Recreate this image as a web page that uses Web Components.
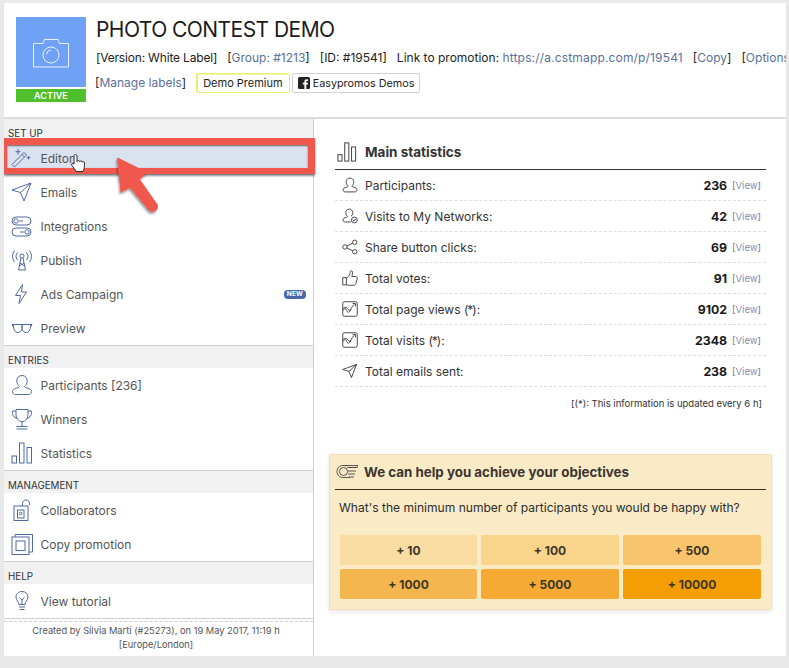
<!DOCTYPE html>
<html>
<head>
<meta charset="utf-8">
<title>Photo contest demo</title>
<style>
    html, body { margin: 0; padding: 0; }
    body { background: #e9e9e9; font-family: Inter, "Liberation Sans", sans-serif; overflow: hidden; }
    .tight { letter-spacing: -1px; margin-right: 1px; }
</style>
</head>
<body>

<promo-page>
    <promo-header slot="header"></promo-header>
    <side-menu slot="side">
        <menu-section label="SET UP">
            <menu-item icon="wand" active>Editor</menu-item>
            <menu-item icon="send">Emails</menu-item>
            <menu-item icon="toggles">Integrations</menu-item>
            <menu-item icon="antenna">Publish</menu-item>
            <menu-item icon="bolt" badge="NEW">Ads Campaign</menu-item>
            <menu-item icon="glasses">Preview</menu-item>
        </menu-section>
        <menu-section label="ENTRIES">
            <menu-item icon="user">Participants [236]</menu-item>
            <menu-item icon="trophy">Winners</menu-item>
            <menu-item icon="bars">Statistics</menu-item>
        </menu-section>
        <menu-section label="MANAGEMENT">
            <menu-item icon="lock">Collaborators</menu-item>
            <menu-item icon="copy">Copy promotion</menu-item>
        </menu-section>
        <menu-section label="HELP">
            <menu-item icon="bulb">View tutorial</menu-item>
        </menu-section>
        <created-note>Created by Sílvia Martí (#25273), on 19 May 2017, 11:19 h<br>[Europe/London]</created-note>
    </side-menu>
    <main-stats slot="main">
        <stat-row icon="user" value="236">Participants:</stat-row>
        <stat-row icon="usercheck" value="42">Visits to My Networks:</stat-row>
        <stat-row icon="share" value="69">Share button clicks:</stat-row>
        <stat-row icon="thumb" value="91">Total votes:</stat-row>
        <stat-row icon="chart" value="9102">Total page views <span class="tight">(*)</span>:</stat-row>
        <stat-row icon="chart" value="2348">Total visits <span class="tight">(*)</span>:</stat-row>
        <stat-row icon="send" value="238">Total emails sent:</stat-row>
    </main-stats>
    <help-card slot="main"></help-card>
    <editor-callout slot="overlay"></editor-callout>
</promo-page>

<template id="promo-page">
    <style>
        :host { display: block; position: relative; width: 782px; height: 653px; margin: 3px 0 0 4px; background: #fff; overflow: hidden; box-shadow: 0 1px 1px #ddd; }
        .body { display: grid; grid-template-columns: 310px 1fr; height: 539px; border-top: 2px solid #dcdcdc; }
        .main { padding: 13px 14px 0 15px; }
    </style>
    <slot name="header"></slot>
    <div class="body">
        <slot name="side"></slot>
        <div class="main"><slot name="main"></slot></div>
    </div>
    <slot name="overlay"></slot>
</template>

<template id="promo-header">
    <style>
        :host { display: flex; height: 114px; box-sizing: border-box; padding: 14px 0 0 12px; gap: 10px; color: #222; font-size: 12px; white-space: nowrap; overflow: hidden; }
        .thumb { width: 70px; flex: none; }
        .pic { height: 70px; background: #6fa1f6; border-radius: 1px; display: flex; align-items: center; justify-content: center; }
        .pic svg { margin-top: 3px; }
        .state { margin-top: 2px; height: 13px; line-height: 13px; background: #4fc02c; color: #fff; font-weight: 600; font-size: 9px; text-align: center; letter-spacing: .1px; }
        h1 { margin: 0; font-size: 21px; line-height: 26px; font-weight: 400; color: #1c1c1c; letter-spacing: -.55px; }
        .meta { display: flex; margin-top: 7px; line-height: 16px; }
        .meta span { margin-right: 10px; }
        .meta .version { letter-spacing: -.18px; }
        .meta .url { letter-spacing: .16px; }
        a { color: #5a7199; text-decoration: none; }
        .labels { display: flex; align-items: center; margin-top: 6px; height: 22px; }
        .labels .manage { margin-right: 9px; position: relative; top: -1px; left: -1px; }
        .tag { display: flex; align-items: center; gap: 3px; height: 20px; box-sizing: border-box; padding: 0 5px; border: 1px solid #d2d2d2; border-radius: 2px; font-size: 10.800px; color: #222; margin-right: 2px; }
        .tag.premium { padding: 0 6px; font-size: 11px; border: 1px solid #eded6a; box-shadow: inset 1px 0 #eded6a, inset 0 1px #f6f6a8; }
    </style>
    <div class="thumb">
        <div class="pic">
            <svg width="36" height="29" viewBox="0 0 36 29" fill="none" stroke="#fff" stroke-width="1" opacity=".85">
                <path d="M.5 4.500H10L11.500.5H25L26.500 4.500H35.500V28H.5z"/>
                <circle cx="18" cy="16" r="8"/>
                <path d="M13.500 15.500a4.800 4.800 0 0 1 4.500-4.500"/>
            </svg>
        </div>
        <div class="state">ACTIVE</div>
    </div>
    <div>
        <h1>PHOTO CONTEST DEMO</h1>
        <div class="meta">
            <span class="version">[Version: White Label]</span>
            <span>[<a>Group: #1213</a>]</span>
            <span>[ID: #19541]</span>
            <span>Link to promotion: <a class="url">https://a.cstmapp.com/p/19541</a></span>
            <span>[<a>Copy</a>]</span>
            <span>[<a>Options</a>]</span>
        </div>
        <div class="labels">
            <span class="manage">[<a>Manage labels</a>]</span>
            <div class="tag premium">Demo Premium</div>
            <div class="tag">
                <svg width="12" height="12" viewBox="0 0 12 12"><rect width="12" height="12" rx="1.500" fill="#222"/><path d="M8.300 12V7.500h1.500l.2-1.700H8.300V4.700c0-.5.200-.8.800-.8h1V2.400c-.2 0-.8-.1-1.400-.1-1.400 0-2.300.8-2.300 2.300v1.200H4.800v1.700h1.600V12z" fill="#fff"/></svg>
                Easypromos Demos
            </div>
        </div>
    </div>
</template>

<template id="side-menu">
    <style>
        :host { display: block; border-right: 1px solid #cfcfcf; box-sizing: border-box; width: 310px; }
    </style>
    <slot></slot>
</template>

<template id="menu-section">
    <style>
        :host { display: block; }
        .head { height: 22px; box-sizing: border-box; padding: 8px 0 0 4px; line-height: 14px; background: #f1f1f1; color: #333; font-size: 9.800px; }
        :host(:not(:first-child)) .head { border-top: 1px solid #cfcfcf; height: 23px; padding-top: 8px; }
    </style>
    <div class="head"></div>
    <slot></slot>
</template>

<template id="menu-item">
    <style>
        :host { display: flex; align-items: center; height: 34px; padding-left: 7px; color: #555; font-size: 12px; }
        :host([active]) { background: #dbe2ef; }
        .ico { width: 22px; height: 22px; margin-right: 7.500px; color: #4f6aa3; flex: none; }
        .text { flex: 1; }
        .badge { display: none; margin-right: 7px; height: 9px; line-height: 9px; padding: 0 3px; border-radius: 4px; background: #4a67ab; color: #fff; font-size: 6.500px; font-weight: 700; letter-spacing: .2px; }
    </style>
    <line-icon class="ico"></line-icon>
    <span class="text"><slot></slot></span>
    <span class="badge"></span>
</template>

<template id="created-note">
    <style>
        :host { display: block; border-top: 1px solid #cfcfcf; text-align: center; font-size: 9.300px; line-height: 14px; color: #555; }
        .inner { margin-top: 2px; border-top: 1px dashed #cfcfcf; padding: 2px 5px 0 0; }
    </style>
    <div class="inner"><slot></slot></div>
</template>

<template id="main-stats">
    <style>
        :host { display: block; }
        .title { display: flex; align-items: center; gap: 8px; height: 38px; padding: 3px 0 0 2px; border-bottom: 1px solid #333; color: #333; font-size: 13.500px; font-weight: 700; box-sizing: border-box; width: 431px; margin: 0 0 0 6px; }
        .title line-icon { width: 20px; height: 20px; color: #444; --sw: 1.100; }
        .rows { margin-left: 6px; width: 431px; }
        .note { margin: 10px 10px 0 0; text-align: right; font-size: 9.500px; line-height: 14px; color: #333; }
    </style>
    <div class="title"><line-icon name="bars"></line-icon>Main statistics</div>
    <div class="rows"><slot></slot></div>
    <div class="note">[(*): This information is updated every 6 h]</div>
</template>

<template id="stat-row">
    <style>
        :host { display: flex; align-items: center; height: 31px; box-sizing: border-box; border-bottom: 1px dashed #dedede; padding: 0 5px 0 7px; color: #333; font-size: 12px; }
        line-icon { width: 16px; height: 16px; margin-right: 7px; color: #333; flex: none; --sw: 1.200; }
        .label { flex: 1; }
        b { font-size: 12.300px; font-weight: 700; color: #1a1a1a; }
        .view { margin-left: 5px; font-size: 9.500px; color: #777; }
        a { color: #7d8fb3; }
    </style>
    <line-icon></line-icon>
    <span class="label"><slot></slot></span>
    <b></b>
    <span class="view">[<a>View</a>]</span>
</template>

<template id="help-card">
    <style>
        :host { display: block; margin: 43px 0 0 0; width: 443px; height: 156px; box-sizing: border-box; padding: 0 5px; background: #faebc6; border: 1px solid #f3e2b8; box-shadow: 0 2px 5px rgba(0,0,0,.1); color: #333; }
        .title { display: flex; align-items: center; gap: 6px; height: 35px; border-bottom: 1px solid #3a2f1c; padding-left: 1px; font-size: 13.350px; font-weight: 700; box-sizing: border-box; color: #3a3630; }
        .title line-icon { width: 22px; height: 22px; margin-top: 6px; color: #444; --sw: .9; }
        p { margin: 0; padding: 10px 0 0 4px; height: 45px; box-sizing: border-box; line-height: 16px; font-size: 12.050px; color: #2d2d2d; }
        .grid { display: grid; grid-template-columns: 137px 138px 138px; grid-auto-rows: 30px; gap: 4px; margin-left: 5px; }
        button { all: unset; text-align: center; font: 700 12px Inter, sans-serif; color: #3d3628; border-radius: 2px; }
    </style>
    <div class="title"><line-icon name="hand"></line-icon>We can help you achieve your objectives</div>
    <p>What's the minimum number of participants you would be happy with?</p>
    <div class="grid">
        <button style="background:#f9dca2">+ 10</button>
        <button style="background:#f9d48a">+ 100</button>
        <button style="background:#f7c46b">+ 500</button>
        <button style="background:#f6b64f">+ 1000</button>
        <button style="background:#f5aa34">+ 5000</button>
        <button style="background:#f49d04">+ 10000</button>
    </div>
</template>

<template id="editor-callout">
    <style>
        :host { display: block; position: absolute; left: -4px; top: -3px; width: 320px; height: 215px; pointer-events: none; }
        .frame { position: absolute; left: 4px; top: 138px; width: 311px; height: 36px; box-sizing: border-box; border: solid #f0584d; border-width: 7px 7px 6px 3px; box-shadow: inset 0 1px 2px rgba(0,0,0,.55), 0 2px 2px rgba(0,0,0,.45); }
        svg { position: absolute; left: 0; top: 0; overflow: visible; }
    </style>
    <div class="frame"></div>
    <svg width="320" height="215" viewBox="0 0 320 215">
        <defs>
            <filter id="sh" x="-30%" y="-30%" width="160%" height="160%"><feDropShadow dx="-1" dy="2" stdDeviation="1.200" flood-color="#000" flood-opacity=".4"/></filter>
        </defs>
        <path d="M117.500 158L147 172.500L139.500 179.500L156 203A4.500 4.500 0 0 1 149 210L130 187.500L121 192Z" fill="#f0584d" stroke="#f0584d" stroke-width="1" stroke-linejoin="round" filter="url(#sh)"/>
        <path d="M74 156c0-2 3-2 3 0v5.500c.5-1.500 2.500-1.200 2.700.2.500-1.200 2.400-1 2.500.4.600-.9 2.200-.6 2.300.7l-.2 4.500c-.1 2-1 3-1.500 4.300h-6.500c-1-1.700-3-4-4.500-6.500-.8-1.500.8-2.500 2-1.200l.2.200z" fill="#fff" stroke="#111" stroke-width=".9" stroke-linejoin="round"/>
    </svg>
</template>

<script type="text/javascript">
    const ICONS = {
        wand: '<path d="M1 17.500L13 5.500l2.500 2.500L3.500 20z"/><path d="M11 7.500l2.500 2.500"/><path d="M7 2v5.500M4.500 4.700h5M17.500 9v3.500M15.700 10.700h3.600"/>',
        send: '<path d="M1 9L20 2 13 20 9.500 11.500z"/><path d="M9.500 11.500L20 2"/>',
        toggles: '<rect x="1" y="2" width="19" height="8" rx="4"/><circle cx="5" cy="6" r="2.200"/><path d="M8 6h4"/><rect x="1" y="13" width="19" height="8" rx="4"/><circle cx="16" cy="17" r="2.200"/><path d="M9 17h4"/>',
        antenna: '<circle cx="11" cy="7" r="2"/><path d="M10 9L7.500 21h7L12 9M8.500 17l4.500-3M13.500 17L9 14"/><path d="M6.500 3.500a6 6 0 0 0 0 7.500M15.500 3.500a6 6 0 0 1 0 7.500M3.500 1.500a10 10 0 0 0 0 11.500M18.500 1.500a10 10 0 0 1 0 11.500"/>',
        bolt: '<path d="M11.500 1.500L4.500 12.500h5L8 20.500l7.500-11.500h-5z"/>',
        glasses: '<path d="M1 7.500h20M2.500 7.500c0 0-.5 8 4 8s5-4.500 4.500-8M11 7.500c-.5 3.500 0 8 4.500 8s4-8 4-8"/><path d="M1 7.500l1 2M21 7.500l-1 2"/>',
        user: '<path d="M11 1.500c-3 0-5.200 2.200-5.200 5.300 0 2.700 1.300 4.500 2.600 5.500 0 1-.8 1.300-2.500 1.700-2.400.6-4.400 1.500-4.400 3.600 0 2 1.300 2.900 3.300 2.900h12.400c2 0 3.300-.9 3.300-2.900 0-2.100-2-3-4.400-3.600-1.700-.4-2.500-.7-2.500-1.700 1.300-1 2.600-2.800 2.600-5.500 0-3.100-2.200-5.300-5.200-5.300z"/>',
        usercheck: '<path d="M10 1.500c-2.800 0-4.800 2-4.800 4.900 0 2.500 1.200 4.200 2.400 5.100 0 1-.7 1.200-2.300 1.600-2.200.6-4 1.400-4 3.400 0 1.800 1.200 2.700 3 2.700h8"/><path d="M10 1.500c2.800 0 4.800 2 4.800 4.900 0 2.500-1.200 4.200-2.400 5.100"/><circle cx="17" cy="16.500" r="4"/><path d="M15 16.500l1.500 1.500 2.500-3"/>',
        share: '<circle cx="4" cy="11" r="3"/><circle cx="17.500" cy="4.500" r="3"/><circle cx="17.500" cy="17.500" r="3"/><path d="M6.800 9.700L14.800 5.800M6.800 12.300l8 3.900"/>',
        thumb: '<path d="M1 10.500h5v10H1zM6 10.500c3 0 5-4 5.500-8.500 0-1.500 3-1.500 3 1.500 0 2-.5 4-1 5.500h5.500c2 0 2.500 2 1.800 3.500l-2 6.500c-.5 1.500-1.500 2-3 2H9c-1.500 0-3-1-3-1"/>',
        chart: '<rect x="1" y="1" width="20" height="20" rx="2.500"/><path d="M1.500 13c2-3.500 3.500-3.500 5 0s3 3.500 5-.5 3.500-6.500 6-8.500"/><path d="M1.500 10c2.500-2 5-1.500 7 1s3 2.500 4 1"/><path d="M14.500 3.500h4v4"/>',
        bars: '<rect x="1" y="14" width="4.500" height="7"/><rect x="8.500" y="1" width="4.500" height="20"/><rect x="16" y="5.500" width="4.500" height="15.500"/>',
        trophy: '<path d="M5 1.500h12v5c0 4-2.500 7-6 7s-6-3-6-7z"/><path d="M5 3H1.500c-.5 4 1 6.500 5 7.500M17 3h3.500c.5 4-1 6.500-5 7.500M11 13.500v5M5.500 18.500h11M5.500 21h11"/>',
        lock: '<rect x="3" y="7" width="14" height="14.500"/><rect x="6.500" y="11" width="6.500" height="8"/><circle cx="9.700" cy="14.500" r="1.300"/><path d="M11.500 7V4.500C11.500 2.500 13 1 15 1s3.500 1.500 3.500 3.500V6"/>',
        copy: '<rect x="1" y="4" width="17" height="17.500"/><rect x="5" y="8" width="9" height="9.500"/><path d="M4 4V1.500h17.500V19H18"/>',
        bulb: '<path d="M8 14.500c0-3-3-4-3-7.500 0-3.300 2.700-5.500 6-5.500s6 2.200 6 5.500c0 3.500-3 4.500-3 7.500z"/><path d="M8.500 7.500l2.500 2.500 2.500-2.500M11 10v4.500M8 17h6M8.500 19.500h5"/>',
        hand: '<path d="M8 1.500h14l-.8 2H11.500M11.500 3.500h9M12 7h8M12 10h7M13 13h5"/><path d="M11 1.500H7C3.500 1.500 1 4 1 7.500s2.500 6 6 6h7"/><circle cx="7.500" cy="7.500" r="4"/>'
    };

    // Small helper so every element gets its shadow the same way
    function attachTemplate(el, id) {
        const shadow = el.attachShadow({mode: 'open'});
        shadow.appendChild(document.getElementById(id).content.cloneNode(true));
        return shadow;
    }

    class LineIcon extends HTMLElement {
        constructor() {
            super();
            this.attachShadow({mode: 'open'});
        }
        static get observedAttributes() { return ['name']; }
        attributeChangedCallback() { this.draw(); }
        connectedCallback() { this.draw(); }
        draw() {
            const path = ICONS[this.getAttribute('name')] || '';
            this.shadowRoot.innerHTML = `<style>:host { display: block; } svg { display: block; width: 100%; height: 100%; stroke-width: var(--sw, 1); }</style>
                <svg viewBox="0 0 22 22" fill="none" stroke="currentColor" preserveAspectRatio="xMidYMid meet">${path}</svg>`;
        }
    }

    class SimpleTemplate extends HTMLElement {
        constructor() {
            super();
            this.root = attachTemplate(this, this.localName);
        }
    }

    class MenuSection extends SimpleTemplate {
        connectedCallback() {
            this.root.querySelector('.head').innerText = this.getAttribute('label');
        }
    }

    class MenuItem extends SimpleTemplate {
        connectedCallback() {
            this.root.querySelector('line-icon').setAttribute('name', this.getAttribute('icon'));
            const badge = this.root.querySelector('.badge');
            if (this.hasAttribute('badge')) {
                badge.innerText = this.getAttribute('badge');
                badge.style.display = 'block';
            }
        }
    }

    class StatRow extends SimpleTemplate {
        connectedCallback() {
            this.root.querySelector('line-icon').setAttribute('name', this.getAttribute('icon'));
            this.root.querySelector('b').innerText = this.getAttribute('value');
        }
    }

    customElements.define('line-icon', LineIcon);
    ['promo-page', 'promo-header', 'side-menu', 'created-note', 'main-stats', 'help-card', 'editor-callout'].forEach((name) => {
        customElements.define(name, class extends SimpleTemplate {});
    });
    customElements.define('menu-section', MenuSection);
    customElements.define('menu-item', MenuItem);
    customElements.define('stat-row', StatRow);
</script>
</body>
</html>
